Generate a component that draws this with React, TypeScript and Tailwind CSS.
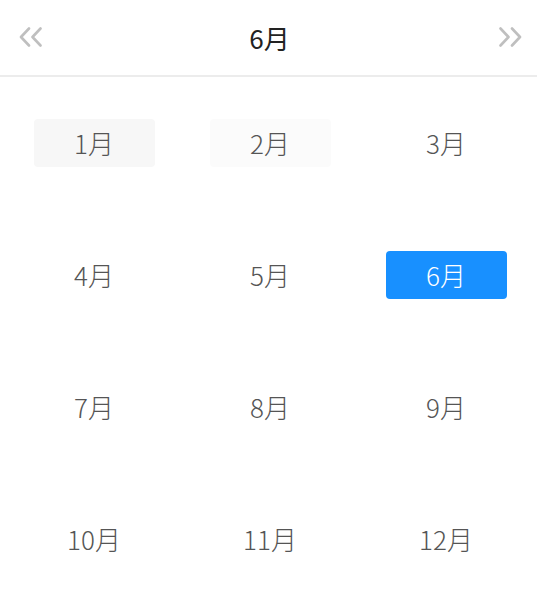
import { useState } from 'react';

const months = ['1月', '2月', '3月', '4月', '5月', '6月', '7月', '8月', '9月', '10月', '11月', '12月'];

function DoubleChevron({ dir }: { dir: 'left' | 'right' }) {
  return (
    <svg width="24" height="20" viewBox="0 0 24 20" fill="none" stroke="#bfbfbf" strokeWidth="2.6" strokeLinecap="round" strokeLinejoin="round" className={dir === 'right' ? 'rotate-180' : ''}>
      <path d="M10 1.5 2 10l8 8.5" />
      <path d="M21.5 1.5 13.5 10l8 8.5" />
    </svg>
  );
}

export default function App() {
  const [selected, setSelected] = useState(5);

  return (
    <div className="w-[537px] h-[591px] overflow-hidden bg-white font-['Noto_Sans_CJK_SC','Noto_Sans',sans-serif]">
      <header className="h-[77px] border-b-2 border-[#ececec] flex items-center justify-between pl-[19px] pr-[15px]">
        <button className="pb-[1px]" aria-label="上一年">
          <DoubleChevron dir="left" />
        </button>
        <h1 className="text-[26px] font-normal text-[#222222] leading-none pr-[2px]">{months[selected]}</h1>
        <button className="pb-[1px]" aria-label="下一年">
          <DoubleChevron dir="right" />
        </button>
      </header>
      <div className="grid grid-cols-[176px_176px_176px] auto-rows-[132px] pl-[6px]">
        {months.map((m, i) => (
          <div key={m} className="flex items-center justify-center">
            <button
              onClick={() => setSelected(i)}
              className={`w-[121px] h-[48px] rounded-[4px] text-[26px] font-light leading-none ${
                i === selected
                  ? 'bg-[#1890ff] text-white'
                  : i === 0
                  ? 'bg-[#f7f7f7] text-[#555555]'
                  : i === 1
                  ? 'bg-[#fbfbfb] text-[#555555]'
                  : 'text-[#555555]'
              }`}
            >
              {m}
            </button>
          </div>
        ))}
      </div>
    </div>
  );
}
